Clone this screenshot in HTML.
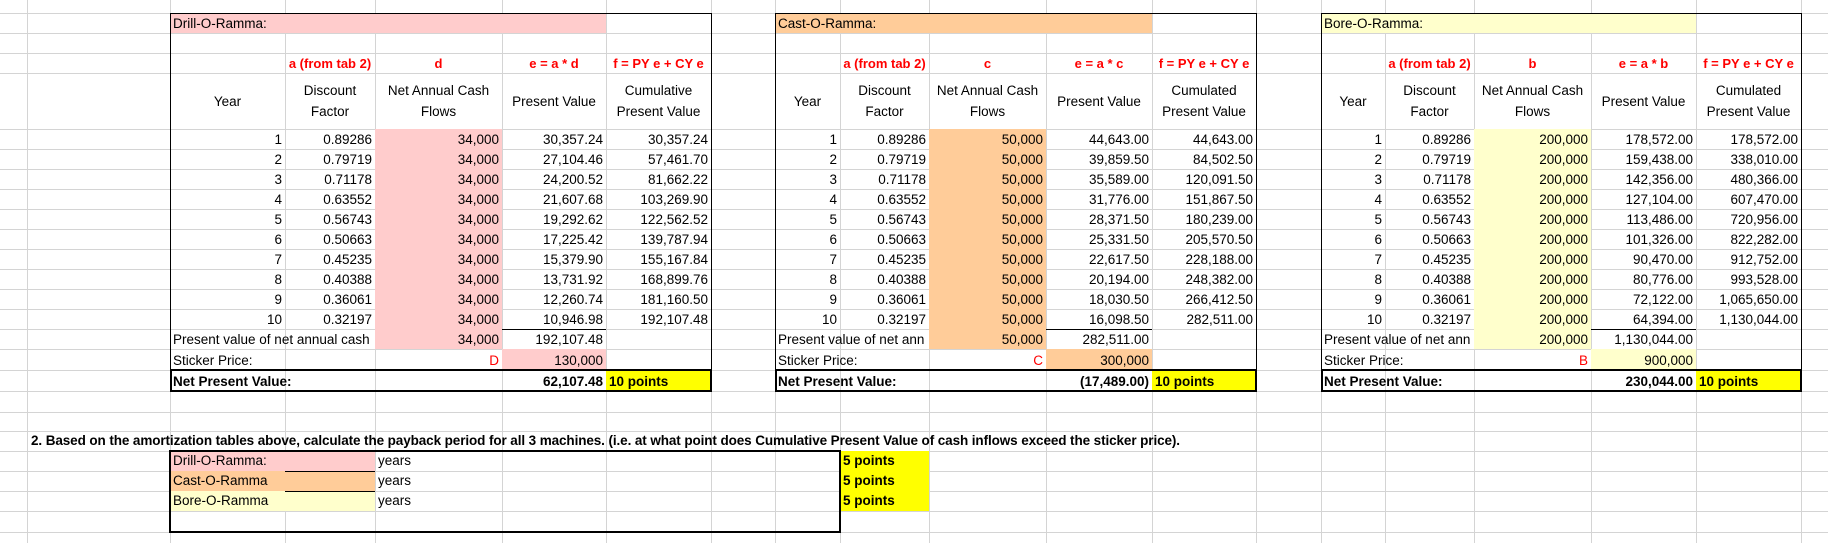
<!DOCTYPE html>
<html><head><meta charset="utf-8"><style>
*{margin:0;padding:0;box-sizing:border-box}
body{width:1828px;height:543px;overflow:hidden;background:#fff;position:relative;font-family:"Liberation Sans",Arial,sans-serif;font-size:13.5px;color:#000}
.v{position:absolute;top:0;width:1px;height:543px;background:#d4d4d4}
.h{position:absolute;left:0;height:1px;width:1828px;background:#d4d4d4}
.k{position:absolute;background:#000}
.bx{position:absolute;border:1px solid #000}
.tb{position:absolute;top:13px;border-collapse:collapse;table-layout:fixed;border-spacing:0}
.tb td{padding:0 3px 1px 3px;white-space:nowrap;overflow:hidden;vertical-align:bottom;line-height:17px;text-align:right}
.tb td.l{text-align:left}
.tb tr.red td{color:#f00;font-weight:bold;text-align:center;font-size:13px}
.tb tr.hd td{vertical-align:middle;text-align:center;line-height:21px;padding-bottom:0}
.b{font-weight:bold}
.r{color:#f00}
.pk{background:#ffcccc}
.or{background:#ffcc99}
.ly{background:#ffffcc}
.yl{background:#ffff00}
.a{position:absolute;white-space:nowrap;line-height:20px;padding-left:3px}
</style></head><body>
<div class="v" style="left:27px"></div><div class="v" style="left:170px"></div><div class="v" style="left:285px"></div><div class="v" style="left:375px"></div><div class="v" style="left:502px"></div><div class="v" style="left:606px"></div><div class="v" style="left:711px"></div><div class="v" style="left:775px"></div><div class="v" style="left:840px"></div><div class="v" style="left:929px"></div><div class="v" style="left:1046px"></div><div class="v" style="left:1152px"></div><div class="v" style="left:1256px"></div><div class="v" style="left:1321px"></div><div class="v" style="left:1385px"></div><div class="v" style="left:1474px"></div><div class="v" style="left:1591px"></div><div class="v" style="left:1696px"></div><div class="v" style="left:1801px"></div>
<div class="h" style="top:13px"></div><div class="h" style="top:33px"></div><div class="h" style="top:53px"></div><div class="h" style="top:73px"></div><div class="h" style="top:129px"></div><div class="h" style="top:149px"></div><div class="h" style="top:169px"></div><div class="h" style="top:189px"></div><div class="h" style="top:209px"></div><div class="h" style="top:229px"></div><div class="h" style="top:249px"></div><div class="h" style="top:269px"></div><div class="h" style="top:289px"></div><div class="h" style="top:309px"></div><div class="h" style="top:329px"></div><div class="h" style="top:349px"></div><div class="h" style="top:370px"></div><div class="h" style="top:391px"></div><div class="h" style="top:412px"></div><div class="h" style="top:431px"></div><div class="h" style="top:451px"></div><div class="h" style="top:471px"></div><div class="h" style="top:491px"></div><div class="h" style="top:511px"></div><div class="h" style="top:532px"></div>

<table class="tb" style="left:170px;width:541px">
<colgroup><col style="width:115px"><col style="width:90px"><col style="width:127px"><col style="width:104px"><col style="width:105px"></colgroup>
<tr style="height:20px"><td class="l pk" colspan="4">Drill-O-Ramma:</td><td></td></tr>
<tr style="height:20px"><td></td><td></td><td></td><td></td><td></td></tr>
<tr class="red" style="height:20px"><td></td><td>a (from tab 2)</td><td>d</td><td>e = a * d</td><td>f = PY e + CY e</td></tr>
<tr class="hd" style="height:56px"><td>Year</td><td>Discount<br>Factor</td><td>Net Annual Cash<br>Flows</td><td>Present Value</td><td>Cumulative<br>Present Value</td></tr>
<tr style="height:20px"><td>1</td><td>0.89286</td><td class="pk">34,000</td><td>30,357.24</td><td>30,357.24</td></tr>
<tr style="height:20px"><td>2</td><td>0.79719</td><td class="pk">34,000</td><td>27,104.46</td><td>57,461.70</td></tr>
<tr style="height:20px"><td>3</td><td>0.71178</td><td class="pk">34,000</td><td>24,200.52</td><td>81,662.22</td></tr>
<tr style="height:20px"><td>4</td><td>0.63552</td><td class="pk">34,000</td><td>21,607.68</td><td>103,269.90</td></tr>
<tr style="height:20px"><td>5</td><td>0.56743</td><td class="pk">34,000</td><td>19,292.62</td><td>122,562.52</td></tr>
<tr style="height:20px"><td>6</td><td>0.50663</td><td class="pk">34,000</td><td>17,225.42</td><td>139,787.94</td></tr>
<tr style="height:20px"><td>7</td><td>0.45235</td><td class="pk">34,000</td><td>15,379.90</td><td>155,167.84</td></tr>
<tr style="height:20px"><td>8</td><td>0.40388</td><td class="pk">34,000</td><td>13,731.92</td><td>168,899.76</td></tr>
<tr style="height:20px"><td>9</td><td>0.36061</td><td class="pk">34,000</td><td>12,260.74</td><td>181,160.50</td></tr>
<tr style="height:20px"><td>10</td><td>0.32197</td><td class="pk">34,000</td><td>10,946.98</td><td>192,107.48</td></tr>
<tr style="height:20px"><td class="l" colspan="2">Present value of net annual cash</td><td class="pk">34,000</td><td>192,107.48</td><td></td></tr>
<tr style="height:21px"><td class="l" colspan="2">Sticker Price:</td><td class="r">D</td><td class="pk">130,000</td><td></td></tr>
<tr style="height:21px"><td class="l b" colspan="2">Net Present Value:</td><td></td><td class="b">62,107.48</td><td class="l b yl">10 points</td></tr>
</table>

<table class="tb" style="left:775px;width:481px">
<colgroup><col style="width:65px"><col style="width:89px"><col style="width:117px"><col style="width:106px"><col style="width:104px"></colgroup>
<tr style="height:20px"><td class="l or" colspan="4">Cast-O-Ramma:</td><td></td></tr>
<tr style="height:20px"><td></td><td></td><td></td><td></td><td></td></tr>
<tr class="red" style="height:20px"><td></td><td>a (from tab 2)</td><td>c</td><td>e = a * c</td><td>f = PY e + CY e</td></tr>
<tr class="hd" style="height:56px"><td>Year</td><td>Discount<br>Factor</td><td>Net Annual Cash<br>Flows</td><td>Present Value</td><td>Cumulated<br>Present Value</td></tr>
<tr style="height:20px"><td>1</td><td>0.89286</td><td class="or">50,000</td><td>44,643.00</td><td>44,643.00</td></tr>
<tr style="height:20px"><td>2</td><td>0.79719</td><td class="or">50,000</td><td>39,859.50</td><td>84,502.50</td></tr>
<tr style="height:20px"><td>3</td><td>0.71178</td><td class="or">50,000</td><td>35,589.00</td><td>120,091.50</td></tr>
<tr style="height:20px"><td>4</td><td>0.63552</td><td class="or">50,000</td><td>31,776.00</td><td>151,867.50</td></tr>
<tr style="height:20px"><td>5</td><td>0.56743</td><td class="or">50,000</td><td>28,371.50</td><td>180,239.00</td></tr>
<tr style="height:20px"><td>6</td><td>0.50663</td><td class="or">50,000</td><td>25,331.50</td><td>205,570.50</td></tr>
<tr style="height:20px"><td>7</td><td>0.45235</td><td class="or">50,000</td><td>22,617.50</td><td>228,188.00</td></tr>
<tr style="height:20px"><td>8</td><td>0.40388</td><td class="or">50,000</td><td>20,194.00</td><td>248,382.00</td></tr>
<tr style="height:20px"><td>9</td><td>0.36061</td><td class="or">50,000</td><td>18,030.50</td><td>266,412.50</td></tr>
<tr style="height:20px"><td>10</td><td>0.32197</td><td class="or">50,000</td><td>16,098.50</td><td>282,511.00</td></tr>
<tr style="height:20px"><td class="l" colspan="2">Present value of net ann</td><td class="or">50,000</td><td>282,511.00</td><td></td></tr>
<tr style="height:21px"><td class="l" colspan="2">Sticker Price:</td><td class="r">C</td><td class="or">300,000</td><td></td></tr>
<tr style="height:21px"><td class="l b" colspan="2">Net Present Value:</td><td></td><td class="b">(17,489.00)</td><td class="l b yl">10 points</td></tr>
</table>

<table class="tb" style="left:1321px;width:480px">
<colgroup><col style="width:64px"><col style="width:89px"><col style="width:117px"><col style="width:105px"><col style="width:105px"></colgroup>
<tr style="height:20px"><td class="l ly" colspan="4">Bore-O-Ramma:</td><td></td></tr>
<tr style="height:20px"><td></td><td></td><td></td><td></td><td></td></tr>
<tr class="red" style="height:20px"><td></td><td>a (from tab 2)</td><td>b</td><td>e = a * b</td><td>f = PY e + CY e</td></tr>
<tr class="hd" style="height:56px"><td>Year</td><td>Discount<br>Factor</td><td>Net Annual Cash<br>Flows</td><td>Present Value</td><td>Cumulated<br>Present Value</td></tr>
<tr style="height:20px"><td>1</td><td>0.89286</td><td class="ly">200,000</td><td>178,572.00</td><td>178,572.00</td></tr>
<tr style="height:20px"><td>2</td><td>0.79719</td><td class="ly">200,000</td><td>159,438.00</td><td>338,010.00</td></tr>
<tr style="height:20px"><td>3</td><td>0.71178</td><td class="ly">200,000</td><td>142,356.00</td><td>480,366.00</td></tr>
<tr style="height:20px"><td>4</td><td>0.63552</td><td class="ly">200,000</td><td>127,104.00</td><td>607,470.00</td></tr>
<tr style="height:20px"><td>5</td><td>0.56743</td><td class="ly">200,000</td><td>113,486.00</td><td>720,956.00</td></tr>
<tr style="height:20px"><td>6</td><td>0.50663</td><td class="ly">200,000</td><td>101,326.00</td><td>822,282.00</td></tr>
<tr style="height:20px"><td>7</td><td>0.45235</td><td class="ly">200,000</td><td>90,470.00</td><td>912,752.00</td></tr>
<tr style="height:20px"><td>8</td><td>0.40388</td><td class="ly">200,000</td><td>80,776.00</td><td>993,528.00</td></tr>
<tr style="height:20px"><td>9</td><td>0.36061</td><td class="ly">200,000</td><td>72,122.00</td><td>1,065,650.00</td></tr>
<tr style="height:20px"><td>10</td><td>0.32197</td><td class="ly">200,000</td><td>64,394.00</td><td>1,130,044.00</td></tr>
<tr style="height:20px"><td class="l" colspan="2">Present value of net ann</td><td class="ly">200,000</td><td>1,130,044.00</td><td></td></tr>
<tr style="height:21px"><td class="l" colspan="2">Sticker Price:</td><td class="r">B</td><td class="ly">900,000</td><td></td></tr>
<tr style="height:21px"><td class="l b" colspan="2">Net Present Value:</td><td></td><td class="b">230,044.00</td><td class="l b yl">10 points</td></tr>
</table>

<div class="bx" style="left:170px;top:13px;width:542px;height:379px"></div>
<div class="bx" style="left:170px;top:369px;width:542px;height:23px;border-width:2px"></div>
<div class="k" style="left:502px;top:329px;width:104px;height:1px"></div>
<div class="bx" style="left:775px;top:13px;width:482px;height:379px"></div>
<div class="bx" style="left:775px;top:369px;width:482px;height:23px;border-width:2px"></div>
<div class="k" style="left:1046px;top:329px;width:106px;height:1px"></div>
<div class="bx" style="left:1321px;top:13px;width:481px;height:379px"></div>
<div class="bx" style="left:1321px;top:369px;width:481px;height:23px;border-width:2px"></div>
<div class="k" style="left:1591px;top:329px;width:105px;height:1px"></div>

<div class="a b" style="left:28px;top:431px;font-size:13.5px;letter-spacing:-0.1px">2. Based on the amortization tables above, calculate the payback period for all 3 machines. (i.e. at what point does Cumulative Present Value of cash inflows exceed the sticker price).</div>
<div class="a pk" style="left:170px;top:451px;width:205px;height:20px">Drill-O-Ramma:</div>
<div class="a or" style="left:170px;top:471px;width:205px;height:20px">Cast-O-Ramma</div>
<div class="a ly" style="left:170px;top:491px;width:205px;height:20px">Bore-O-Ramma</div>
<div class="a" style="left:375px;top:451px">years</div>
<div class="a" style="left:375px;top:471px">years</div>
<div class="a" style="left:375px;top:491px">years</div>
<div class="k" style="left:285px;top:471px;width:90px;height:1px"></div>
<div class="k" style="left:285px;top:491px;width:90px;height:1px"></div>
<div class="a b yl" style="left:840px;top:451px;width:89px;height:20px">5 points</div>
<div class="a b yl" style="left:840px;top:471px;width:89px;height:20px">5 points</div>
<div class="a b yl" style="left:840px;top:491px;width:89px;height:20px">5 points</div>
<div class="bx" style="left:169px;top:450px;width:672px;height:83px;border-width:2px"></div>
</body></html>
